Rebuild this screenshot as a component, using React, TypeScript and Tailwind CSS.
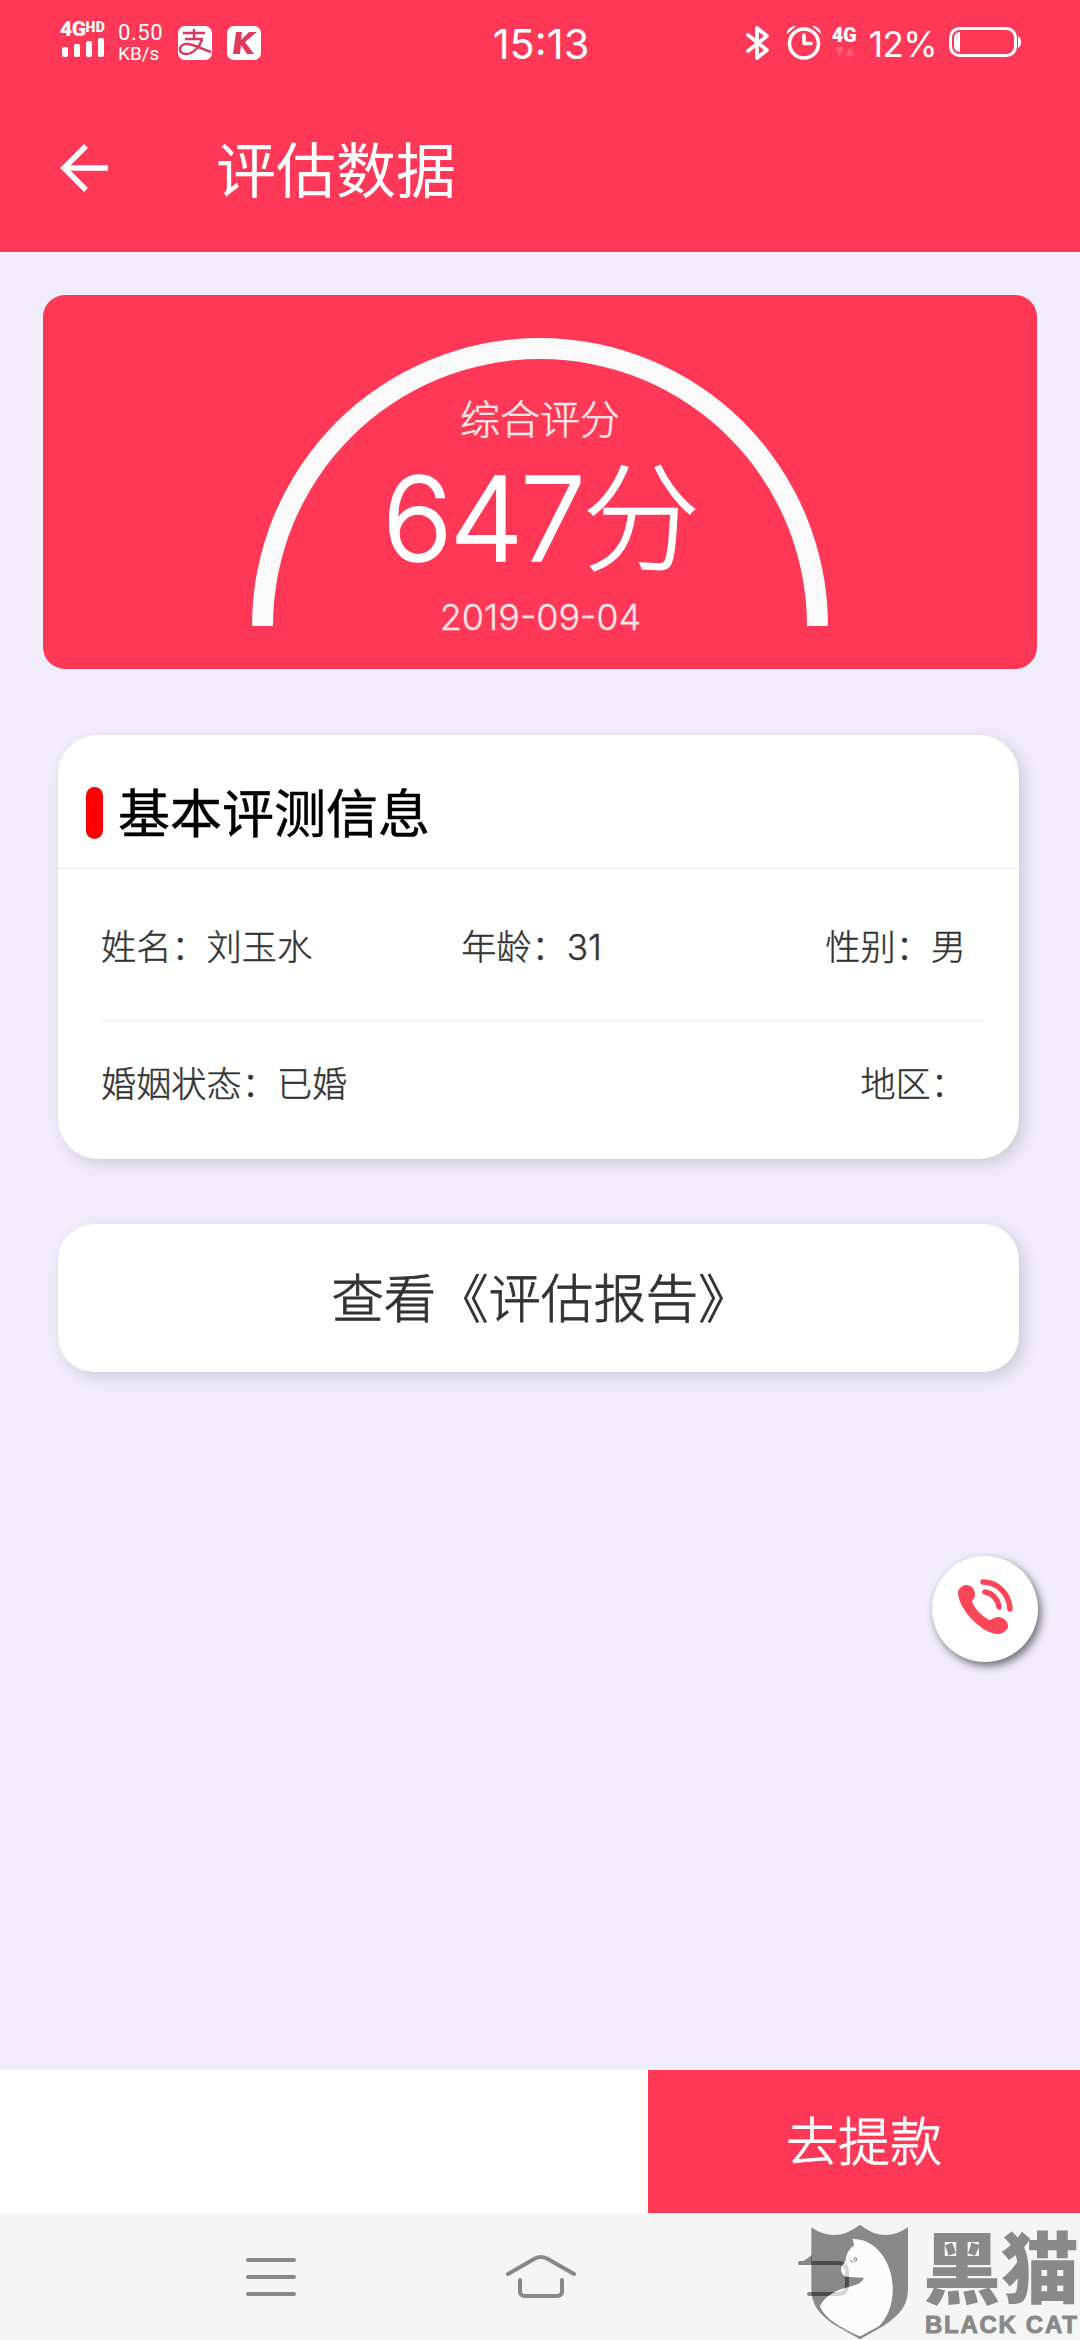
import type { ReactNode } from "react";

const info = {
    name: "刘玉水",
    age: "31",
    gender: "男",
    marriage: "已婚",
    area: "",
};

export default function App() {
    return (
        <main className="relative flex h-[2340px] w-[1080px] flex-col overflow-hidden bg-[#f1edfc] font-['Inter','Noto_Sans_CJK_SC',sans-serif]">
            <header className="h-[252px] shrink-0 bg-[#fe3856] text-white">
                <StatusBar />
                <div className="flex h-[168px] items-center pl-[60px]">
                    <BackArrow />
                    <h1 className="mt-[6px] ml-[107px] text-[60px] leading-[60px]">评估数据</h1>
                </div>
            </header>

            <div className="flex-1">
                <ScoreCard score={647} date="2019-09-04" />

                {/* Basic info */}
                <section className="mt-[66px] ml-[58px] h-[424px] w-[961px] rounded-[40px] bg-white shadow-[5px_5px_16px_rgba(0,0,0,0.15)]">
                    <div className="flex h-[134px] items-center border-b border-[#e9e9e9] pt-[23px] pl-[28px]">
                        <span className="h-[52px] w-[17px] rounded-full bg-[#fe0000]"></span>
                        <h2 className="mt-[4px] ml-[15px] text-[52px] leading-[52px] text-black [-webkit-text-stroke:0.5px]">基本评测信息</h2>
                    </div>
                    <div className="mr-[35px] ml-[43px] text-[35.2px] leading-[36px] text-[#333]">
                        <div className="flex h-[152px] items-center border-b border-[#ececec] pt-[4px]">
                            <Field label="姓名" value={info.name} />
                            <Field label="年龄" value={info.age} className="ml-[149px]" />
                            <Field label="性别" value={info.gender} className="mr-[18px] ml-auto" />
                        </div>
                        <div className="flex h-[126px] items-center justify-between pr-[18px]">
                            <Field label="婚姻状态" value={info.marriage} />
                            <Field label="地区" value={info.area} />
                        </div>
                    </div>
                </section>

                <button className="mt-[65px] ml-[58px] block h-[148px] w-[961px] rounded-[36px] bg-white pt-[2px] pl-[5px] text-[52.4px] leading-[52px] font-light text-[#333] shadow-[5px_5px_16px_rgba(0,0,0,0.15)] [-webkit-text-stroke:0.8px]">
                    查看《评估报告》
                </button>
            </div>

            {/* Floating call button */}
            <button className="absolute top-[1556px] left-[932px] flex size-[106px] items-center justify-center rounded-full bg-white shadow-[3px_4px_9px_rgba(0,0,0,0.55)]">
                <PhoneIcon />
            </button>

            <div className="flex h-[143px] shrink-0 bg-white">
                <button className="ml-auto w-[432px] bg-[#fe3856] pt-[2px] text-[52px] leading-[52px] font-light text-white [-webkit-text-stroke:0.9px]">
                    去提款
                </button>
            </div>

            <NavBar />
            <Watermark />
        </main>
    );
}

function StatusBar() {
    return (
        <div className="flex h-[84px] justify-between pr-[58px] pl-[60px]">
            <div className="flex w-[400px] items-start">
                <div className="mt-[21px] w-[46px]">
                    <div className="flex items-start font-['Roboto'] font-black">
                        <span className="text-[21px] leading-[17px] tracking-[-0.5px]">4G</span>
                        <span className="text-[14px] leading-[12px] tracking-[0.5px]">HD</span>
                    </div>
                    <div className="flex h-[19px] items-end gap-[6px] pl-[2px]">
                        <i className="h-[10px] w-[6px] rounded-[2px] bg-white"></i>
                        <i className="h-[13px] w-[6px] rounded-[2px] bg-white"></i>
                        <i className="h-[16px] w-[6px] rounded-[2px] bg-white"></i>
                        <i className="h-[19px] w-[6px] rounded-[2px] bg-white"></i>
                    </div>
                </div>
                <div className="mt-[22px] ml-[12px] w-[48px] font-['Roboto'] leading-[21px]">
                    <div className="text-[22px] tracking-[0.6px]">0.50</div>
                    <div className="text-[19px]">KB/s</div>
                </div>
                <svg className="mt-[26px] ml-[12px]" width="34" height="34" viewBox="0 0 34 34">
                    <rect width="34" height="34" rx="7" fill="#fff" />
                    <g fill="none" stroke="#d93a5c" strokeWidth="2.4">
                        <path d="M5 7h22M16 3v10M7 13h18" />
                        <path d="M24 13c-2 8-9 15-16 15-4 0-6-2-6-5s3-5 7-5c7 0 14 5 24 8" />
                    </g>
                </svg>
                <svg className="mt-[26px] ml-[15px]" width="34" height="34" viewBox="0 0 34 34">
                    <rect width="34" height="34" rx="7" fill="#fff" />
                    <path d="M9 6h6l-1 8 8-8h8L18 16l9 12h-7l-6-9-1 9H6z" fill="#e0395a" />
                </svg>
            </div>

            <div className="mt-[24px] text-[41.5px] leading-[40px]">15:13</div>

            <div className="flex w-[400px] items-start justify-end">
                <svg className="mt-[24px]" width="24" height="38" viewBox="0 0 24 38">
                    <path d="M2 11l19 15-10 8V4l10 8L2 27" fill="none" stroke="#fff" strokeWidth="3.8" strokeLinejoin="round" strokeLinecap="round" />
                </svg>
                <svg className="mt-[24px] ml-[16px]" width="36" height="38" viewBox="0 0 36 38">
                    <g fill="none" stroke="#fff" strokeLinecap="round">
                        <circle cx="18" cy="19.5" r="14.5" strokeWidth="3.6" />
                        <path d="M18 11v8.500h7" strokeWidth="3.6" strokeLinejoin="round" />
                    </g>
                    <path d="M1 10C1 5 5 2 10 2zM35 10c0-5-4-8-9-8z" fill="#fff" />
                </svg>
                <div className="mt-[27px] ml-[10px] w-[26px]">
                    <div className="font-['Roboto'] text-[20px] leading-[17px] font-black tracking-[-0.5px]">4G</div>
                    <svg className="mt-[3px] ml-[3px]" width="20" height="10" viewBox="0 0 20 10">
                        <path d="M0 0h9L4.500 9zM11 9h8L15 0z" fill="#fff" fillOpacity=".2" />
                    </svg>
                </div>
                <div className="mt-[24px] ml-[11px] text-[35px] leading-[40px] tracking-[-0.6px]">12%</div>
                <svg className="mt-[27px] ml-[12px]" width="73" height="30" viewBox="0 0 73 30">
                    <rect x="1.5" y="1.5" width="65" height="27" rx="9" fill="none" stroke="#fff" strokeWidth="3" />
                    <path d="M11 5v20c-4 0-6-3-6-6v-8c0-3 2-6 6-6z" fill="#fff" />
                    <path d="M69 9c2 1 3 3 3 6s-1 5-3 6z" fill="#fff" />
                </svg>
            </div>
        </div>
    );
}

function BackArrow() {
    return (
        <svg width="49" height="48" viewBox="0 0 49 48">
            <path d="M26 2L4 24l22 22M4 24h44" fill="none" stroke="#fff" strokeWidth="5.5" />
        </svg>
    );
}

function ScoreCard({ score, date }: { score: number; date: string }) {
    return (
        <section className="mt-[43px] ml-[43px] h-[374px] w-[994px] rounded-[22px] bg-[#fe3856] pt-[43px]">
            <div className="mx-auto h-[288px] w-[576px] rounded-t-[288px] border-[21.5px] border-b-0 border-[#fafafa] pt-[36px] text-center font-light text-white">
                <div className="text-[40px] leading-[50px] text-white/85 [-webkit-text-stroke:0.5px]">综合评分</div>
                <div className="mt-[14px] -ml-[20px] w-[573px] text-[117px] leading-[120px] tracking-[-3px] [-webkit-text-stroke:1.6px]">{score}分</div>
                <div className="mt-[18px] ml-px text-[36px] leading-[40px] text-white/85 [-webkit-text-stroke:0.3px]">{date}</div>
            </div>
        </section>
    );
}

function Field({ label, value, className = "" }: { label: string; value: ReactNode; className?: string }) {
    return (
        <span className={`font-light whitespace-nowrap [-webkit-text-stroke:0.4px] ${className}`}>
            {label}：{value}
        </span>
    );
}

function PhoneIcon() {
    return (
        <svg width="106" height="106" viewBox="0 0 106 106">
            <path
                d="M34 29c5 0 9 4 9 9 0 4-2 5-3 8 3 7 10 14 17 18 3 0 5-3 9-3 5 0 10 4 10 9 0 4-5 8-10 8-9 0-21-8-30-19-6-8-10-16-10-22 0-4 4-8 8-8z"
                fill="#fd4758"
            />
            <g fill="none" stroke="#fd4758" strokeWidth="5.5" strokeLinecap="round">
                <path d="M53 36c7 1 13 7 14 15" />
                <path d="M51 26c14 0 26 11 27 27" />
            </g>
        </svg>
    );
}

function NavBar() {
    return (
        <nav className="flex h-[127px] shrink-0 items-start bg-[#f5f5f5] pt-[40px] pl-[246px]">
            <svg width="50" height="48" viewBox="0 0 50 48">
                <path d="M2 7h46M2 24h46M2 41h46" stroke="#888" strokeWidth="4" strokeLinecap="round" />
            </svg>
            <svg className="ml-[210px]" width="70" height="48" viewBox="0 0 70 48">
                <g fill="none" stroke="#888" strokeWidth="4" strokeLinecap="round">
                    <path d="M2 21L29 5.500q6-3 12 0L68 21" />
                    <path d="M14 27v11q0 5 5 5h32q5 0 5-5V27" />
                </g>
            </svg>
            <svg className="ml-[221px]" width="54" height="48" viewBox="0 0 54 48">
                <path d="M3 10h38q9 0 9 9v13q0 9-9 9H12" fill="none" stroke="#888" strokeWidth="4" strokeLinecap="round" />
                <path d="M1 12l14-10v10z" fill="#888" />
            </svg>
        </nav>
    );
}

function Watermark() {
    return (
        <div className="pointer-events-none absolute right-0 bottom-0 flex h-[122px] w-[290px]">
            <svg className="shrink-0" width="130" height="122" viewBox="0 0 390 366">
                <path
                    fillRule="evenodd"
                    fill="#000"
                    fillOpacity=".44"
                    d="M64 28q72 50 146-8 72 58 144 8v182c0 50-20 76-70 112l-74 42-74-42c-50-34-72-62-72-112zM188 62l5 20c-14 10-24 24-26 46l-13 18c-2 18 4 26 14 30l54 3c-4 16-24 22-46 28-36 10-70 24-86 58 14 36 60 64 120 90l56-30c22-20 42-60 42-112 0-70-40-138-100-148z"
                />
                <path
                    fill="#fff"
                    fillOpacity=".65"
                    d="M188 62l5 20c-14 10-24 24-26 46l-13 18c-2 18 4 26 14 30l54 3c-4 16-24 22-46 28-36 10-70 24-86 58 14 36 60 64 120 90l56-30c22-20 42-60 42-112 0-70-40-138-100-148z"
                />
                <path d="M181 124q2 10 10 8M192 120q10-4 7 8-6 4-7-8z" fill="none" stroke="#888" strokeWidth="3" />
            </svg>
            <div className="ml-[3px] text-[#898989]">
                <div className="mt-[15px] font-['Liberation_Sans','Noto_Sans_CJK_SC',sans-serif] text-[78px] leading-[76px] font-black whitespace-nowrap">黑猫</div>
                <div className="mt-[2px] ml-[2px] font-['Liberation_Sans',sans-serif] text-[24px] leading-[28px] font-bold tracking-[1.7px] whitespace-nowrap [-webkit-text-stroke:0.9px]">BLACK CAT</div>
            </div>
        </div>
    );
}
